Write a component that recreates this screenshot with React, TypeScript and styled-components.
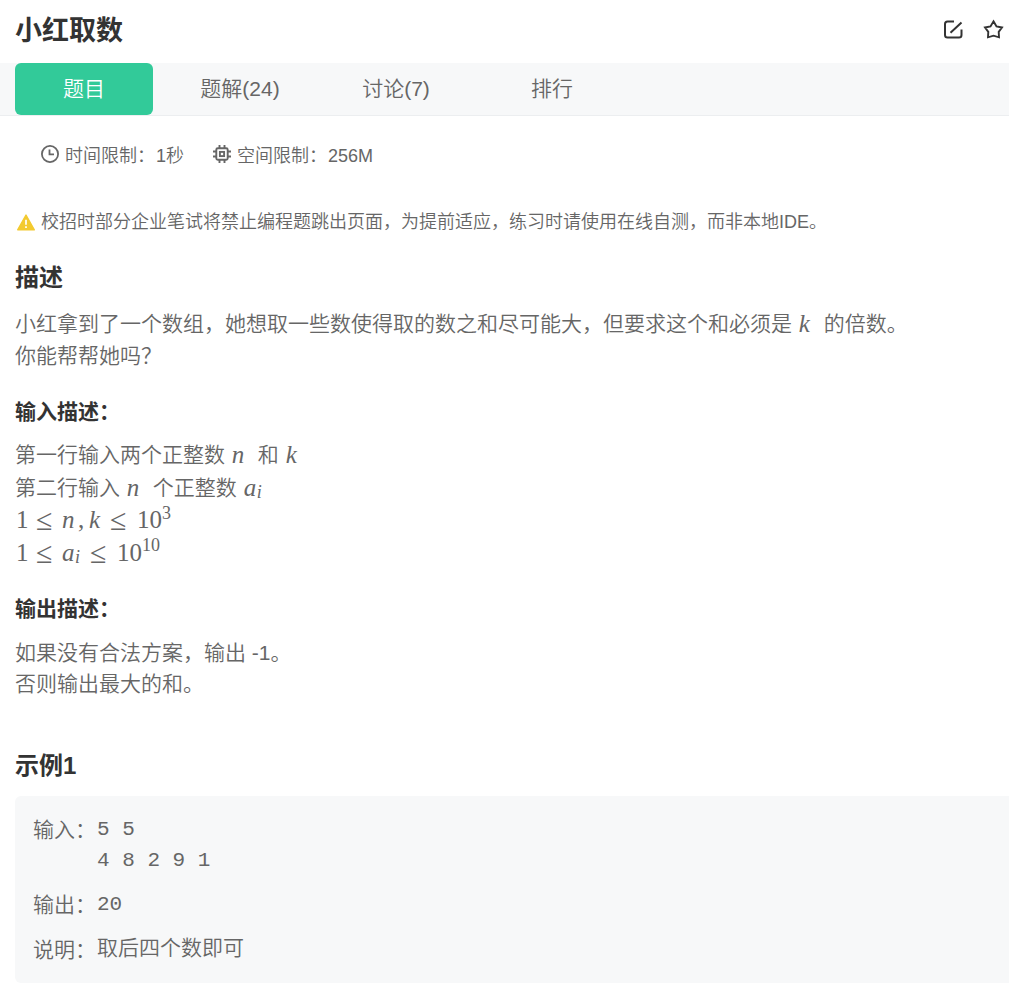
import React from "react";
import styled, { createGlobalStyle } from "styled-components";

const GlobalStyle = createGlobalStyle`
  * { box-sizing: border-box; }
  body {
    margin: 0;
    background: #fff;
    color: #666;
    font-family: "Liberation Sans", "Noto Sans CJK SC", sans-serif;
    font-weight: 350;
    overflow: hidden;
  }
`;

const Page = styled.main`
  width: 100%;
  height: 993px;
  overflow: hidden;
`;

const Header = styled.header`
  display: flex;
  align-items: center;
  justify-content: space-between;
  height: 63px;
  padding: 0 5px 4px 15px;
`;

const Title = styled.h1`
  margin: 0;
  padding-top: 3px;
  font-size: 27px;
  line-height: 40px;
  font-weight: 700;
  color: #333;
`;

const Actions = styled.div`
  display: flex;
  gap: 18px;
  color: #333;
  svg { display: block; }
`;

const Tabs = styled.nav`
  display: flex;
  height: 53px;
  padding-left: 15px;
  background: #f7f8f9;
  border-bottom: 1px solid #eceef0;
`;

const Tab = styled.a<{ $active?: boolean; $width: number }>`
  width: ${(p) => p.$width}px;
  height: 52px;
  border-radius: 6px;
  background: ${(p) => (p.$active ? "#32ca99" : "transparent")};
  color: ${(p) => (p.$active ? "#fff" : "#666")};
  font-size: 21px;
  line-height: 51px;
  text-align: center;
`;

const Limits = styled.div`
  display: flex;
  gap: 28px;
  padding: 26px 0 0 40px;
  height: 94px;
`;

const Limit = styled.span`
  display: flex;
  gap: 5px;
  height: 27px;
  font-size: 18px;
  line-height: 29px;
  svg { margin-top: 2px; }
`;

const Notice = styled.p`
  display: flex;
  align-items: center;
  gap: 5px;
  margin: 0;
  padding-left: 16px;
  height: 25px;
  font-size: 18px;
  line-height: 25px;
`;

const Heading = styled.h2<{ $top: number; $small?: boolean }>`
  margin: ${(p) => p.$top}px 0 0 15px;
  font-size: ${(p) => (p.$small ? 21 : 24)}px;
  line-height: 36px;
  font-weight: 700;
  color: #333;
`;

const Colon = styled.span`
  margin-right: 1px;
`;

const Paragraph = styled.div<{ $top: number }>`
  margin: ${(p) => p.$top}px 0 0 15px;
  font-size: 21px;
`;

const Line = styled.div<{ $h?: number }>`
  display: flex;
  height: ${(p) => p.$h ?? 32}px;
  line-height: ${(p) => p.$h ?? 32}px;
  white-space: pre;
`;

const MathCell = styled.span<{ $w: number; $italic?: boolean }>`
  width: ${(p) => p.$w}px;
  padding-left: 1px;
  font-family: "Liberation Serif", serif;
  font-size: 25px;
  font-style: ${(p) => (p.$italic ? "italic" : "normal")};
`;

const Relation = styled(MathCell)`
  padding-left: 1px;
  font-size: 30px;
`;

const Script = styled(MathCell)<{ $shift: number }>`
  font-size: 18px;
  transform: translateY(${(p) => p.$shift}px);
`;

const Sample = styled.section`
  display: flex;
  flex-direction: column;
  gap: 13px;
  margin: 12px 0 0 15px;
  padding: 18px 18px 0;
  height: 187px;
  border-radius: 6px 0 0 6px;
  background: #f7f8f9;
`;

const SampleRow = styled.div`
  display: flex;
  font-size: 21px;
  line-height: 32px;
`;

const SampleLabel = styled.span`
  width: 64px;
  white-space: nowrap;
`;

const SampleValue = styled.pre`
  margin: 0;
  font-family: "Liberation Mono", "Noto Sans CJK SC", monospace;
  font-size: 21px;
  line-height: 31px;
`;

const EditIcon = () => (
  <svg width="22" height="22" viewBox="0 0 22 22" fill="none" stroke="currentColor" strokeWidth="2">
    <path d="M12 2.500H5.500Q3 2.500 3 5V16Q3 18.500 5.500 18.500H17Q19.500 18.500 19.500 16V10.500M8.500 13.800L19.500 3.500" />
  </svg>
);

const StarIcon = () => (
  <svg width="22" height="22" viewBox="0 0 22 22" fill="none" stroke="currentColor" strokeWidth="1.900">
    <path d="M11.500 2.300L14.500 7.400L20 8.500L16.700 12.900L17 18.300L11.500 16.700L6 18.300L6.300 12.900L3 8.500L8.500 7.400Z" />
  </svg>
);

const ClockIcon = () => (
  <svg width="20" height="20" viewBox="0 0 20 20" fill="none" stroke="currentColor" strokeWidth="1.800">
    <circle cx="10" cy="10" r="8.100" />
    <path d="M9.500 5.500V10.300H14" />
  </svg>
);

const ChipIcon = () => (
  <svg width="20" height="20" viewBox="0 0 20 20" fill="none" stroke="currentColor" strokeWidth="1.900">
    <rect x="4.300" y="4.300" width="11.400" height="11.400" rx="1.500" />
    <rect x="7.900" y="7.900" width="4.200" height="4.200" />
    <path d="M7.500 1V4M12.500 1V4M7.500 16V19M12.500 16V19M1 7.500H4M1 12.500H4M16 7.500H19M16 12.500H19" />
  </svg>
);

const WarningIcon = () => (
  <svg width="20" height="20" viewBox="0 0 20 20">
    <path d="M10 2L18.300 16.800H1.700Z" fill="#f3ca30" stroke="#f3ca30" strokeWidth="1.400" strokeLinejoin="round" />
    <path d="M10 6.800V11.800M10 13.300V15.100" stroke="#fff" strokeWidth="1.700" />
  </svg>
);

export default function App() {
  return (
    <>
      <GlobalStyle />
      <Page>
        <Header>
          <Title>小红取数</Title>
          <Actions>
            <EditIcon />
            <StarIcon />
          </Actions>
        </Header>
        <Tabs>
          <Tab $active $width={138}>题目</Tab>
          <Tab $width={174}>题解(24)</Tab>
          <Tab $width={138}>讨论(7)</Tab>
          <Tab $width={174}>排行</Tab>
        </Tabs>
        <Limits>
          <Limit><ClockIcon /><span>时间限制<Colon>：</Colon>1秒</span></Limit>
          <Limit><ChipIcon /><span>空间限制<Colon>：</Colon>256M</span></Limit>
        </Limits>
        <Notice>
          <WarningIcon />
          校招时部分企业笔试将禁止编程题跳出页面，为提前适应，练习时请使用在线自测，而非本地IDE。
        </Notice>

        <Heading $top={25}>描述</Heading>
        <Paragraph $top={12}>
          <Line>
            小红拿到了一个数组，她想取一些数使得取的数之和尽可能大，但要求这个和必须是{" "}
            <MathCell $w={26} $italic>k</MathCell>的倍数。
          </Line>
          <Line>你能帮帮她吗？</Line>
        </Paragraph>

        <Heading $small $top={22}>输入描述<Colon>：</Colon></Heading>
        <Paragraph $top={8}>
          <Line $h={33}>
            第一行输入两个正整数{" "}
            <MathCell $w={27} $italic>n</MathCell>和{" "}
            <MathCell $w={20} $italic>k</MathCell>
          </Line>
          <Line $h={33}>
            第二行输入{" "}
            <MathCell $w={27} $italic>n</MathCell>个正整数{" "}
            <MathCell $w={13} $italic>a</MathCell>
            <Script $w={8} $italic $shift={5}>i</Script>
          </Line>
          <Line $h={32}>
            <MathCell $w={20}>1</MathCell>
            <Relation $w={26}>≤</Relation>
            <MathCell $w={16} $italic>n</MathCell>
            <MathCell $w={11}>,</MathCell>
            <MathCell $w={21} $italic>k</MathCell>
            <Relation $w={27}>≤</Relation>
            <MathCell $w={25}>10</MathCell>
            <Script $w={10} $shift={-7}>3</Script>
          </Line>
          <Line $h={33}>
            <MathCell $w={20}>1</MathCell>
            <Relation $w={26}>≤</Relation>
            <MathCell $w={13} $italic>a</MathCell>
            <Script $w={15} $italic $shift={5}>i</Script>
            <Relation $w={27}>≤</Relation>
            <MathCell $w={25}>10</MathCell>
            <Script $w={20} $shift={-7}>10</Script>
          </Line>
        </Paragraph>

        <Heading $small $top={22}>输出描述<Colon>：</Colon></Heading>
        <Paragraph $top={10}>
          <Line $h={31}>如果没有合法方案，输出 -1。</Line>
          <Line>否则输出最大的和。</Line>
        </Paragraph>

        <Heading $top={48}>示例1</Heading>
        <Sample>
          <SampleRow>
            <SampleLabel>输入<Colon>：</Colon></SampleLabel>
            <SampleValue>{"5 5\n4 8 2 9 1"}</SampleValue>
          </SampleRow>
          <SampleRow>
            <SampleLabel>输出<Colon>：</Colon></SampleLabel>
            <SampleValue>20</SampleValue>
          </SampleRow>
          <SampleRow>
            <SampleLabel>说明<Colon>：</Colon></SampleLabel>
            <SampleValue>取后四个数即可</SampleValue>
          </SampleRow>
        </Sample>
      </Page>
    </>
  );
}
